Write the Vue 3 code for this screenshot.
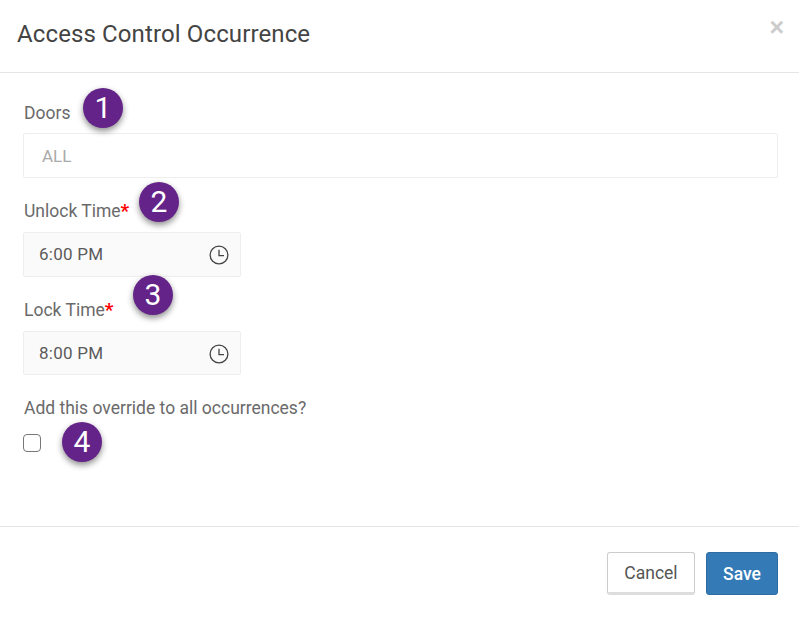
<script setup>
const times = [
  { label: 'Unlock Time', value: '6:00 PM' },
  { label: 'Lock Time', value: '8:00 PM' }
]

// annotation markers sitting over the form
const markers = [
  { n: 1, x: 83, y: 88 },
  { n: 2, x: 139, y: 182 },
  { n: 3, x: 133, y: 275 },
  { n: 4, x: 62, y: 422 }
]
</script>

<template>
  <div class="modal">
    <header class="modal__header">
      <h4 class="modal__title">Access Control Occurrence</h4>
      <span class="modal__close">×</span>
    </header>

    <div class="modal__body">
      <label class="field-label field-label--doors">Doors</label>
      <div class="input input--doors">ALL</div>

      <div v-for="t in times" :key="t.label" class="time-field">
        <label class="field-label">{{ t.label }}<span class="req">*</span></label>
        <div class="input input--time">
          <span>{{ t.value }}</span>
          <svg class="clock" width="20" height="20" viewBox="0 0 20 20" fill="none" stroke="#444" stroke-width="1.3">
            <circle cx="10" cy="10" r="8.9" />
            <path d="M10 4.8V10.6H15" />
          </svg>
        </div>
      </div>

      <label class="field-label field-label--override">Add this override to all occurrences?</label>
      <span class="checkbox"></span>
    </div>

    <footer class="modal__footer">
      <button class="btn btn--default">Cancel</button>
      <button class="btn btn--primary">Save</button>
    </footer>

    <span
      v-for="m in markers"
      :key="m.n"
      class="marker"
      :style="{ left: m.x + 'px', top: m.y + 'px' }"
    >{{ m.n }}</span>
  </div>
</template>

<style>
body {
  background: #fff;
}
</style>

<style scoped>
.modal {
  position: relative;
  width: 799px;
  height: 620px;
  box-sizing: border-box;
  font-family: Roboto, "Liberation Sans", sans-serif;
  color: #666;
  overflow: hidden;
  background: #fff;
}

.modal__header {
  display: flex;
  justify-content: space-between;
  height: 73px;
  box-sizing: border-box;
  padding: 0 15px 0 17px;
  border-bottom: 1px solid #e5e5e5;
}

.modal__title {
  margin: 0;
  padding-top: 19px;
  font-size: 24px;
  font-weight: 400;
  line-height: 30px;
  letter-spacing: 0.12px;
  color: #444;
}

.modal__close {
  padding-top: 13px;
  font-family: "Liberation Sans", sans-serif;
  font-size: 25px;
  font-weight: 700;
  line-height: 28px;
  color: #ccc;
}

.modal__body {
  height: 453px;
  box-sizing: border-box;
  padding: 30px 21px 0 23px;
}

.field-label {
  display: block;
  font-size: 17.5px;
  line-height: 20px;
  color: #6a6a6a;
}

.field-label--doors {
  margin-left: 1px;
  margin-bottom: 10px;
}

.req {
  color: #f00;
  font-size: 19px;
  font-weight: 700;
  line-height: 0;
}

.input {
  box-sizing: border-box;
  border: 1px solid #eee;
  border-radius: 2px;
}

.input--doors {
  height: 45px;
  padding-left: 18px;
  font-size: 17px;
  line-height: 44px;
  color: #aaa;
}

.time-field {
  margin-top: 23px;
}

.time-field .field-label {
  margin-left: 1px;
  margin-bottom: 11px;
}

.input--time {
  display: flex;
  align-items: center;
  justify-content: space-between;
  width: 218px;
  height: 44.5px;
  padding: 0 11px 0 15px;
  background: #fafafa;
  font-size: 17px;
  letter-spacing: 0.25px;
  color: #5a5a5a;
}

.clock {
  margin-top: 2px;
}

.field-label--override {
  margin-top: 23px;
  margin-left: 1px;
}

.checkbox {
  display: block;
  width: 18px;
  height: 18px;
  box-sizing: border-box;
  margin-top: 16px;
  border: 1px solid #777;
  border-radius: 4px;
  background: #fff;
}

.modal__footer {
  display: flex;
  justify-content: flex-end;
  gap: 11px;
  padding: 25px 21px 0 0;
  border-top: 1px solid #e5e5e5;
}

.btn {
  height: 43px;
  box-sizing: border-box;
  border-radius: 3px;
  font-family: inherit;
  font-size: 17.5px;
  padding: 0;
}

.btn--default {
  width: 88px;
  border: 1px solid #ccc;
  border-bottom: 3px solid #ddd;
  background: #fff;
  color: #555;
}

.btn--primary {
  width: 72px;
  border: 1px solid #2e6da4;
  background: #337ab7;
  font-weight: 500;
  color: #fff;
}

.marker {
  position: absolute;
  width: 40px;
  height: 40px;
  border-radius: 50%;
  background: #642388;
  box-shadow: 0 3px 6px rgba(0, 0, 0, 0.45);
  font-size: 30px;
  line-height: 40px;
  text-align: center;
  color: #fff;
}
</style>
